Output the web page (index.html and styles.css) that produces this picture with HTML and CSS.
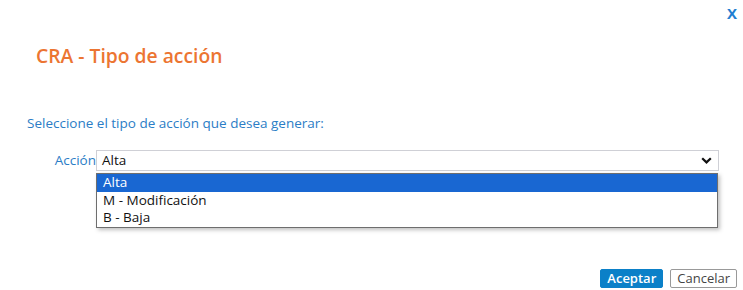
FILE: index.html
```html
<!DOCTYPE html>
<html lang="es">
<head>
<meta charset="utf-8">
<title>CRA - Tipo de acción</title>
<link rel="stylesheet" href="styles.css">
</head>
<body>
<div class="dialog">
  <div class="topbar"><span class="close">X</span></div>
  <h1 class="title">CRA - Tipo de acción</h1>
  <p class="prompt">Seleccione el tipo de acción que desea generar:</p>
  <div class="field">
    <label class="label">Acción</label>
    <div class="select-wrap">
      <div class="select">
        <span class="value">Alta</span>
        <svg class="chev" width="11" height="7" viewBox="0 0 11 7"><path d="M1.2 1.2 L5.5 5.4 L9.8 1.2" fill="none" stroke="#111" stroke-width="2.2"/></svg>
      </div>
      <ul class="options">
        <li class="opt selected">Alta</li>
        <li class="opt">M - Modificación</li>
        <li class="opt">B - Baja</li>
      </ul>
    </div>
  </div>
  <div class="actions">
    <button class="btn primary">Aceptar</button>
    <button class="btn secondary">Cancelar</button>
  </div>
</div>
</body>
</html>
```
FILE: styles.css
```css
html, body { margin: 0; padding: 0; background: #fff; }
body { font-family: "Open Sans", "Noto Sans", sans-serif; width: 743px; height: 290px; overflow: hidden; }
.dialog { display: flex; flex-direction: column; height: 290px; }
.topbar { display: flex; justify-content: flex-end; padding: 3px 6px 0 0; height: 22px; box-sizing: border-box; }
.close { color: #1f7fd1; font-weight: 700; font-size: 15px; line-height: 20px; }
.title { margin: 20px 0 0 36px; color: #ec7532; font-size: 19.3px; font-weight: 600; line-height: 28px; }
.prompt { margin: 44px 0 0 27px; color: #2b7dc6; font-size: 13.5px; line-height: 18px; }
.field { display: flex; align-items: flex-start; margin: 18px 0 0 0; }
.label { width: 96px; text-align: right; color: #2b7dc6; font-size: 13.5px; line-height: 21px; }
.select-wrap { position: relative; width: 623px; }
.select { display: flex; align-items: center; justify-content: space-between; height: 21px; box-sizing: border-box; border: 1px solid #cfd0d6; padding: 0 6px 0 5px; font-size: 13.5px; color: #111; }
.value { line-height: 19px; }
.chev { display: block; }
.options { position: absolute; left: 0; top: 23px; width: 622px; box-sizing: border-box; margin: 0; padding: 0; list-style: none; border: 1px solid #6e6e6e; background: #fff; box-shadow: 2px 2px 4px rgba(0,0,0,0.25); }
.opt { font-size: 13.5px; line-height: 17.7px; height: 17.7px; padding: 0 6px; color: #111; }
.opt.selected { background: #1967d2; color: #fff; }
.actions { margin-top: auto; display: flex; justify-content: flex-end; gap: 7px; padding: 0 6px 2px 0; }
.btn { font-family: inherit; font-size: 13px; height: 19px; line-height: 17px; padding: 0 6px; border-radius: 2px; box-sizing: border-box; cursor: pointer; }
.primary { background: #0b80c8; color: #fff; border: 1px solid #0b80c8; font-weight: 600; }
.secondary { background: #fff; color: #444; border: 1px solid #999; }
```
